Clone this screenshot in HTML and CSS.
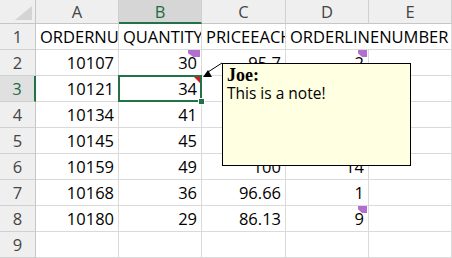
FILE: index.html
```html
<!DOCTYPE html>
<html>
<head>
<meta charset="utf-8"/>
<title>Book1</title>
<link rel="stylesheet" href="styles.css">
</head>
<body>
<div class="sheet">
    <div class="grid">
        <div class="corner"><span class="tri"></span></div>
        <div class="ch">A</div>
        <div class="ch on">B</div>
        <div class="ch">C</div>
        <div class="ch">D</div>
        <div class="ch">E</div>

        <div class="rh">1</div>
        <div class="c">ORDERNUMBER</div>
        <div class="c">QUANTITYORDERED</div>
        <div class="c">PRICEEACH</div>
        <div class="c spill">ORDERLINENUMBER</div>
        <div class="c"></div>

        <div class="rh">2</div>
        <div class="c num">10107</div>
        <div class="c num mark"><span class="thread wide"></span>30</div>
        <div class="c num">95.7</div>
        <div class="c num mark"><span class="thread"></span>2</div>
        <div class="c"></div>

        <div class="rh on">3</div>
        <div class="c num">10121</div>
        <div class="c num sel"><span class="note"></span>34<span class="handle"></span></div>
        <div class="c num"></div>
        <div class="c num"></div>
        <div class="c"></div>

        <div class="rh">4</div>
        <div class="c num">10134</div>
        <div class="c num">41</div>
        <div class="c num"></div>
        <div class="c num"></div>
        <div class="c"></div>

        <div class="rh">5</div>
        <div class="c num">10145</div>
        <div class="c num">45</div>
        <div class="c num"></div>
        <div class="c num"></div>
        <div class="c"></div>

        <div class="rh">6</div>
        <div class="c num">10159</div>
        <div class="c num">49</div>
        <div class="c num">100</div>
        <div class="c num">14</div>
        <div class="c"></div>

        <div class="rh">7</div>
        <div class="c num">10168</div>
        <div class="c num">36</div>
        <div class="c num">96.66</div>
        <div class="c num">1</div>
        <div class="c"></div>

        <div class="rh">8</div>
        <div class="c num">10180</div>
        <div class="c num">29</div>
        <div class="c num">86.13</div>
        <div class="c num mark"><span class="thread"></span>9</div>
        <div class="c"></div>

        <div class="rh">9</div>
        <div class="c"></div>
        <div class="c"></div>
        <div class="c"></div>
        <div class="c"></div>
        <div class="c"></div>
    </div>

    <svg class="pointer" width="30" height="20" viewBox="200 60 30 20">
        <line x1="208" y1="72" x2="222" y2="63" stroke="#000" stroke-width="1"/>
        <polygon points="203,77 212,77 208,70" fill="#000"/>
    </svg>

    <div class="comment">
        <div class="author">Joe:</div>
        <div class="body">This is a note!</div>
    </div>
</div>
</body>
</html>
```

FILE: styles.css
```css
body {
    margin: 0;
    padding: 0;
    background: #ffffff;
    overflow: hidden;
    font-family: "Open Sans", "Noto Sans", sans-serif;
}
.sheet {
    position: relative;
    width: 452px;
    height: 258px;
    overflow: hidden;
}
.grid {
    display: grid;
    grid-template-columns: 36px 83px 83px 84px 83px 83px;
    grid-template-rows: 24px repeat(9, 26px);
}
.grid > div {
    box-sizing: border-box;
    white-space: nowrap;
    overflow: hidden;
}
.corner {
    position: relative;
    background: #efefef;
    border-right: 1px solid #c6c6c6;
    border-bottom: 1px solid #c6c6c6;
}
.corner .tri {
    position: absolute;
    right: 3px;
    bottom: 3px;
    width: 17px;
    height: 14px;
    background: #d4d4d4;
    clip-path: polygon(100% 0, 100% 100%, 0 100%);
}
.ch {
    background: #efefef;
    color: #444444;
    font-size: 16.5px;
    line-height: 23px;
    text-align: center;
    border-right: 1px solid #d0d0d0;
    border-bottom: 1px solid #c6c6c6;
}
.ch.on {
    background: #d6d6d6;
    color: #1f6b41;
    border-bottom: 2px solid #217346;
}
.rh {
    background: #efefef;
    color: #444444;
    font-size: 16.5px;
    line-height: 25px;
    text-align: center;
    border-right: 1px solid #c6c6c6;
    border-bottom: 1px solid #d0d0d0;
}
.rh.on {
    background: #e0e0e0;
    color: #1f6b41;
    border-right: 2px solid #217346;
}
.c {
    position: relative;
    padding: 0 4px;
    color: #000000;
    font-size: 16.5px;
    line-height: 25px;
    border-right: 1px solid #dadada;
    border-bottom: 1px solid #dadada;
}
.grid > .c.spill {
    overflow: visible;
    border-right: none;
    z-index: 1;
}
.num {
    text-align: right;
}
.thread {
    position: absolute;
    top: 0;
    right: 1px;
    width: 9px;
    height: 7px;
    background: #b46ed0;
    clip-path: polygon(0 0, 100% 0, 100% 100%, 45% 100%, 0 45%);
}
.thread.wide {
    width: 12px;
}
.grid > .c.sel {
    overflow: visible;
    z-index: 2;
}
.sel::after {
    content: '';
    position: absolute;
    left: -1px;
    top: -1px;
    right: -1px;
    bottom: -1px;
    border: 2px solid #217346;
}
.note {
    position: absolute;
    top: 1px;
    right: 1px;
    width: 6px;
    height: 6px;
    background: #e0141e;
    clip-path: polygon(0 0, 100% 0, 100% 100%);
}
.handle {
    position: absolute;
    right: -4px;
    bottom: -4px;
    width: 5px;
    height: 5px;
    background: #217346;
    border: 1px solid #ffffff;
    z-index: 3;
}
.pointer {
    position: absolute;
    left: 200px;
    top: 60px;
    z-index: 4;
}
.comment {
    position: absolute;
    left: 222px;
    top: 63px;
    width: 189px;
    height: 103px;
    box-sizing: border-box;
    padding: 0 4px;
    background: #ffffe1;
    border: 1px solid #000000;
    z-index: 5;
}
.author {
    font-family: "Liberation Serif", "DejaVu Serif", serif;
    font-weight: bold;
    font-size: 18px;
    line-height: 20px;
    margin-top: 1px;
}
.body {
    font-size: 15.5px;
    line-height: 19px;
    margin-top: -1px;
}
```
